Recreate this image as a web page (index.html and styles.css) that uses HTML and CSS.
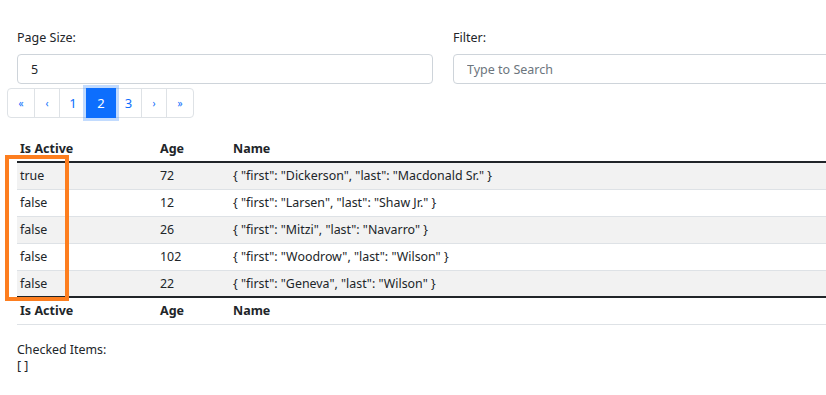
FILE: index.html
```html
<!doctype html>
<html lang="en">
<head>
  <meta charset="utf-8" />
  <meta name="viewport" content="width=device-width,initial-scale=1" />
  <title>Table</title>
  <link rel="stylesheet" href="styles.css">
</head>
<body>
<div class="wrap">
  <div class="filters">
    <div class="field">
      <label>Page Size:</label>
      <input type="text" value="5">
    </div>
    <div class="field">
      <label>Filter:</label>
      <input type="text" placeholder="Type to Search">
    </div>
  </div>

  <ul class="pager">
    <li class="w28 arrow">&laquo;</li>
    <li class="w26 arrow">&lsaquo;</li>
    <li class="w28">1</li>
    <li class="w30 active">2</li>
    <li class="w27">3</li>
    <li class="w26 arrow">&rsaquo;</li>
    <li class="w28 arrow">&raquo;</li>
  </ul>

  <div class="tableWrap">
    <table>
      <thead>
        <tr><th class="c1">Is Active</th><th class="c2">Age</th><th>Name</th></tr>
      </thead>
      <tbody>
        <tr><td>true</td><td>72</td><td>{ "first": "Dickerson", "last": "Macdonald Sr." }</td></tr>
        <tr><td>false</td><td>12</td><td>{ "first": "Larsen", "last": "Shaw Jr." }</td></tr>
        <tr><td>false</td><td>26</td><td>{ "first": "Mitzi", "last": "Navarro" }</td></tr>
        <tr><td>false</td><td>102</td><td>{ "first": "Woodrow", "last": "Wilson" }</td></tr>
        <tr><td>false</td><td>22</td><td>{ "first": "Geneva", "last": "Wilson" }</td></tr>
      </tbody>
      <tfoot>
        <tr><th>Is Active</th><th>Age</th><th>Name</th></tr>
      </tfoot>
    </table>
    <div class="highlight"></div>
  </div>

  <div class="checked">
    <div>Checked Items:</div>
    <div>[ ]</div>
  </div>
</div>
</body>
</html>
```

FILE: styles.css
```css
:root{
  --text:#212529;
  --muted:#6c757d;
  --border:#ced4da;
  --line:#dee2e6;
  --blue:#0d6efd;
  --stripe:#f2f2f2;
  --orange:#fd7e1f;
}

*{box-sizing:border-box}
html,body{overflow:hidden}
body{
  margin:0;
  font-family:"Noto Sans","Open Sans",Arial,sans-serif;
  font-size:12.4px;
  color:var(--text);
  background:#fff;
}

.wrap{width:869px;padding:28px 0 0 17px}

/* ===== FILTROS ===== */
.filters{display:flex;gap:20px}
.field{width:416px}
.field label{
  display:block;
  font-size:12.5px;
  line-height:20px;
  margin-bottom:6px;
}
.field input{
  display:block;
  width:100%;
  height:30px;
  border:1px solid var(--border);
  border-radius:4px;
  padding:0 13px;
  font:inherit;
  font-size:12.5px;
  color:var(--text);
  outline:none;
}
.field input::placeholder{color:var(--muted)}

/* ===== PAGINAÇÃO ===== */
.pager{
  list-style:none;
  margin:4px 0 0 -10px;
  padding:0;
  display:flex;
}
.pager li{
  height:30px;
  display:flex;
  align-items:center;
  justify-content:center;
  border:1px solid var(--line);
  margin-left:-1px;
  color:var(--blue);
  font-size:13px;
}
.pager li:first-child{margin-left:0;border-radius:4px 0 0 4px}
.pager li:last-child{border-radius:0 4px 4px 0}
.pager .arrow{font-size:10px}
.pager .active{
  background:var(--blue);
  border-color:var(--blue);
  color:#fff;
  box-shadow:0 0 0 3px rgba(13,110,253,.25);
  position:relative;
  z-index:1;
}
.w26{width:26px}.w27{width:27px}.w28{width:28px}.w30{width:30px}

/* ===== TABELA ===== */
.tableWrap{position:relative;margin-top:18px}
table{width:852px;border-collapse:collapse}
th,td{text-align:left;padding:0 3px;vertical-align:middle}
th{font-weight:700;font-size:12.5px}
.c1{width:140px}
.c2{width:73px}
thead tr{height:26px}
thead th{border-bottom:2px solid var(--text)}
tbody tr{height:27px}
tbody td{border-bottom:1px solid var(--line)}
tbody tr:nth-child(odd){background:var(--stripe)}
tbody tr:last-child td{border-bottom:none}
tfoot tr{height:27px}
tfoot th{border-top:2px solid var(--text);border-bottom:1px solid var(--line)}

.highlight{
  position:absolute;
  left:-12px;
  top:19px;
  width:64px;
  height:146px;
  border:4px solid var(--orange);
}

.checked{margin-top:17px;line-height:16px}
```
